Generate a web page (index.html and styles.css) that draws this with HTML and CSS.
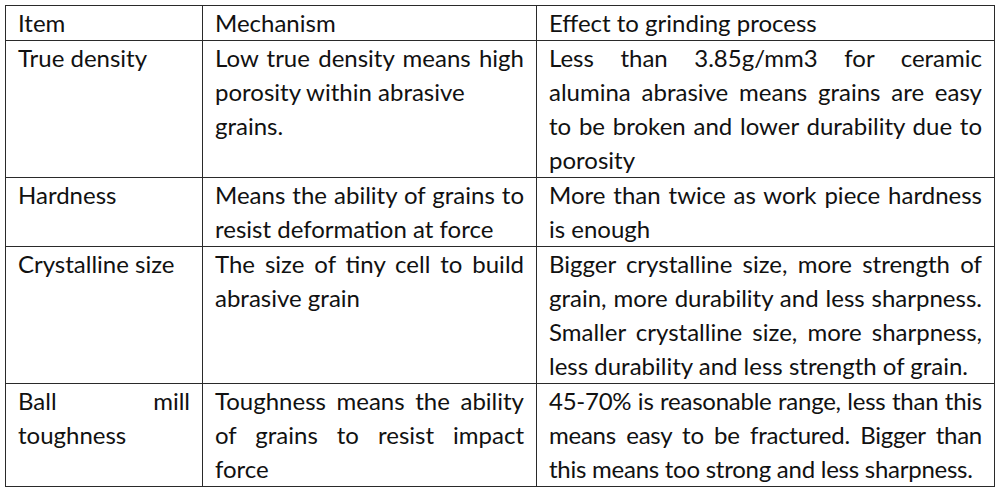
FILE: index.html
```html
<!DOCTYPE html>
<html lang="en">
<head>
<meta charset="utf-8">
<title>Abrasive grain properties</title>
<link rel="stylesheet" href="styles.css">
</head>
<body>
<table class="props">
  <colgroup>
    <col class="c-item">
    <col class="c-mech">
    <col class="c-effect">
  </colgroup>
  <tr>
    <td>Item</td>
    <td>Mechanism</td>
    <td>Effect to grinding process</td>
  </tr>
  <tr>
    <td>True density</td>
    <td>Low true density means high porosity within abrasive<br>grains.</td>
    <td>Less than 3.85g/mm3 for ceramic alumina abrasive means grains are easy to be broken and lower durability due to porosity</td>
  </tr>
  <tr>
    <td>Hardness</td>
    <td>Means the ability of grains to resist deformation at force</td>
    <td>More than twice as work piece hardness is enough</td>
  </tr>
  <tr>
    <td>Crystalline size</td>
    <td>The size of tiny cell to build abrasive grain</td>
    <td>Bigger crystalline size, more strength of grain, more durability and less sharpness. Smaller crystalline size, more sharpness, less durability and less strength of grain.</td>
  </tr>
  <tr>
    <td>Ball mill toughness</td>
    <td>Toughness means the ability of grains to resist impact force</td>
    <td class="tight">45-70% is reasonable range, less than this means easy to be fractured. Bigger than this means too strong and less sharpness.</td>
  </tr>
</table>
</body>
</html>
```

FILE: styles.css
```css
html, body {
  margin: 0;
  background: #ffffff;
}
body {
  padding: 5px 0 0 5px;
  font-family: Lato, "Liberation Sans", sans-serif;
  color: #111111;
}
.props {
  border-collapse: collapse;
  table-layout: fixed;
  width: 989px;
}
.c-item { width: 197px; }
.c-mech { width: 334px; }
.c-effect { width: 458px; }
.props td {
  border: 1px solid #2a2a2a;
  padding: 0 12px;
  vertical-align: top;
  text-align: justify;
  font-size: 24px;
  line-height: 34px;
}
.props td.tight {
  letter-spacing: -0.25px;
}
```
